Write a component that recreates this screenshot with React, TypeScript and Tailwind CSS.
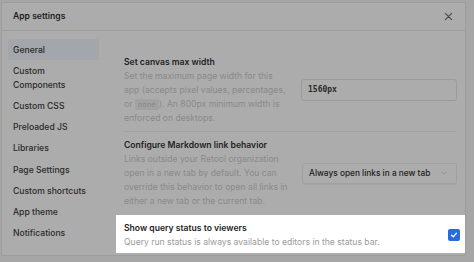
import React from 'react';

const navItems = [
  'General',
  'Custom Components',
  'Custom CSS',
  'Preloaded JS',
  'Libraries',
  'Page Settings',
  'Custom shortcuts',
  'App theme',
  'Notifications',
];

const font = { fontFamily: 'Inter, "Noto Sans", sans-serif' };
const mono = { fontFamily: '"DejaVu Sans Mono", monospace' };

const Sidebar: React.FC = () => (
  <div className="w-[114px] shrink-0 pl-[6px] pr-[17px] pt-[8px]">
    {navItems.map((item, i) => (
      <div
        key={item}
        className={
          'px-[5px] py-[3.6px] text-[8.6px] font-medium leading-[14px] text-[#2a2a2a] ' +
          (i === 0 ? 'rounded-[2px] bg-[#a3a6aa]' : '')
        }
      >
        {i === 1 ? (
          <>
            Custom
            <br />
            Components
          </>
        ) : (
          item
        )}
      </div>
    ))}
  </div>
);

const App: React.FC = () => {
  return (
    <div className="h-[262px] w-[474px] overflow-hidden bg-[#a6a6a6]" style={font}>
      <div className="ml-[1px] mt-[2px] flex h-[254px] w-[465px] flex-col border border-[#9d9d9d] bg-[#acacac]">
        <div className="flex h-[28px] shrink-0 items-center justify-between border-b border-[#9d9d9d] pl-[11px] pr-[12px]">
          <div className="text-[8.6px] font-semibold text-[#1c1c1c]">App settings</div>
          <svg width="9" height="9" viewBox="0 0 10 10" className="text-[#4a4a4a]">
            <path d="M1.5 1.5 L8.5 8.5 M8.5 1.5 L1.5 8.5" stroke="currentColor" strokeWidth="1.3" strokeLinecap="round" />
          </svg>
        </div>

        <div className="flex flex-1">
          <Sidebar />

          <div className="flex flex-1 flex-col pt-[24px]">
            <div className="mx-[8px] flex items-center border-b border-[#a2a2a2] pb-[6px]">
              <div className="w-[164px] shrink-0">
                <div className="text-[8.6px] font-semibold leading-[14px] text-[#1e1e1e]">Set canvas max width</div>
                <div className="text-[8.6px] leading-[14px] text-[#8a8a8a]">
                  Set the maximum page width for this app (accepts pixel values, percentages, or{' '}
                  <span
                    className="inline-block rounded-[2px] bg-[#a2a2a2] px-[3px] align-middle text-[7.5px] leading-[11px] text-[#888]"
                    style={mono}
                  >
                    none
                  </span>
                  ). An 800px minimum width is enforced on desktops.
                </div>
              </div>
              <div className="ml-auto flex h-[22px] w-[156px] items-center rounded-[3px] border border-[#9b9b9b] px-[6px]">
                <span className="text-[8px] font-bold text-[#2a2a2a]" style={mono}>
                  1560px
                </span>
              </div>
            </div>

            <div className="mx-[8px] flex items-center pb-[7px] pt-[6px]">
              <div className="w-[170px] shrink-0">
                <div className="text-[8.6px] font-semibold leading-[14px] text-[#1e1e1e]">
                  Configure Markdown link behavior
                </div>
                <div className="text-[8.6px] leading-[14px] text-[#8a8a8a]">
                  Links outside your Retool organization open in a new tab by default. You can override this behavior to
                  open all links in either a new tab or the current tab.
                </div>
              </div>
              <div className="ml-auto flex h-[21px] w-[155px] items-center justify-between rounded-[3px] border border-[#a0a0a0] pl-[6px] pr-[8px] shadow-[0_1px_1px_rgba(0,0,0,0.06)]">
                <span className="whitespace-nowrap text-[8.3px] font-medium text-[#222]">Always open links in a new tab</span>
                <svg width="8" height="8" viewBox="0 0 10 10" className="text-[#8e8e8e]">
                  <path d="M2 3.5 L5 6.5 L8 3.5" fill="none" stroke="currentColor" strokeWidth="1.1" />
                </svg>
              </div>
            </div>

            <div className="flex items-center bg-white pb-[4px] pl-[8px] pr-[5px] pt-[6px]">
              <div>
                <div className="text-[8.6px] font-semibold leading-[14px] text-[#222]">Show query status to viewers</div>
                <div className="text-[8.6px] leading-[14px] text-[#9a9a9a]">
                  Query run status is always available to editors in the status bar.
                </div>
              </div>
              <div className="ml-auto flex h-[12px] w-[12px] items-center justify-center rounded-[2px] bg-[#2b6be0]">
                <svg width="8" height="8" viewBox="0 0 10 10">
                  <path d="M2 5.2 L4.2 7.2 L8 2.8" fill="none" stroke="white" strokeWidth="1.6" strokeLinecap="round" strokeLinejoin="round" />
                </svg>
              </div>
            </div>
          </div>
        </div>
      </div>
    </div>
  );
};

export default App;
